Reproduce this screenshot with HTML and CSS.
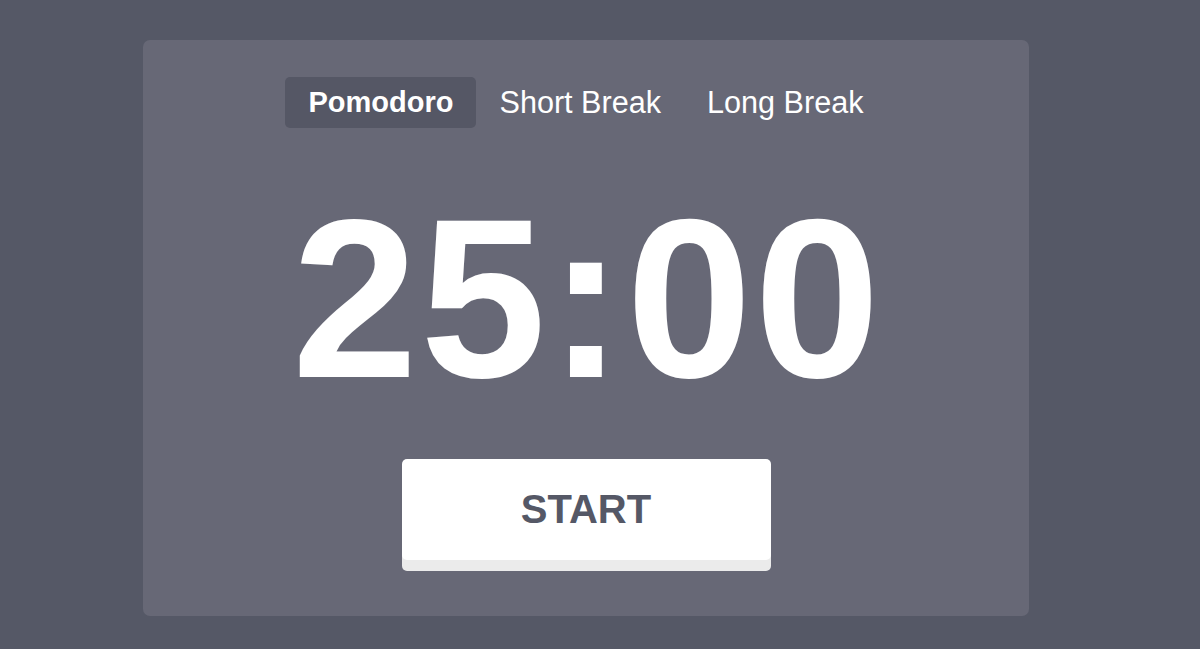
FILE: index.html
```html
<!DOCTYPE html>
<html lang="en">
<head>
<meta charset="utf-8">
<title>Pomodoro</title>
<link rel="stylesheet" href="styles.css">
</head>
<body>
<main class="card">
  <nav class="tabs">
    <button class="tab active">Pomodoro</button>
    <button class="tab">Short Break</button>
    <button class="tab">Long Break</button>
  </nav>
  <div class="timer">25:00</div>
  <button class="start">START</button>
</main>
</body>
</html>
```

FILE: styles.css
```css
* { box-sizing: border-box; }
html, body { margin: 0; padding: 0; }
body {
  background: #555866;
  font-family: "Liberation Sans", Arial, sans-serif;
  color: #ffffff;
  height: 649px;
  overflow: hidden;
}
.card {
  width: 886px;
  height: 576px;
  margin: 40px 0 0 143px;
  background: #676876;
  border-radius: 7px;
  display: flex;
  flex-direction: column;
  align-items: center;
  padding-top: 37px;
}
.tabs {
  display: flex;
}
.tab {
  font-family: inherit;
  font-size: 30.6px;
  color: #ffffff;
  background: transparent;
  border: none;
  height: 51px;
  padding: 0 23px;
  border-radius: 5px;
  cursor: pointer;
  line-height: 51px;
}
.tab.active {
  background: #555765;
  font-weight: bold;
  font-size: 29px;
}
.timer {
  margin-top: 58px;
  font-size: 226px;
  line-height: 226px;
  font-weight: bold;
  letter-spacing: 2.5px;
  padding-left: 2.5px;
  color: #ffffff;
}
.start {
  margin-top: 47px;
  width: 369px;
  height: 101px;
  background: #ffffff;
  border: none;
  border-radius: 5px;
  box-shadow: 0 11px 0 #ebebeb;
  font-family: inherit;
  font-size: 40px;
  font-weight: bold;
  color: #555866;
  cursor: pointer;
}
```
